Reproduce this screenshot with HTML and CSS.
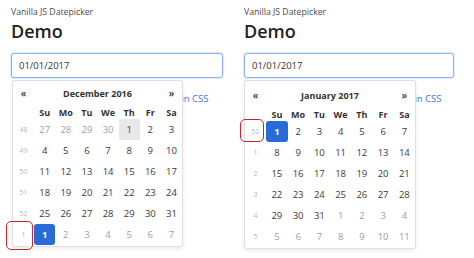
FILE: index.html
```html
<!DOCTYPE html>
<html lang="en">
  <head>
    <meta charset="UTF-8" />
    <title>Vanilla JS Datepicker - Demo</title>
    <link rel="stylesheet" href="styles.css">
  </head>
  <body>
    <div class="shots">
      <!-- December 2016 -->
      <section class="shot shot--dec">
        <p class="eyebrow">Vanilla JS Datepicker</p>
        <h1 class="title">Demo</h1>
        <div class="field">
          <input type="text" value="01/01/2017" />
          <div class="links"><a href="#">Plain CSS</a></div>
          <div class="picker picker--dec">
            <div class="picker-head">
              <span class="nav">&laquo;</span>
              <span class="month">December 2016</span>
              <span class="nav">&raquo;</span>
            </div>
            <div class="picker-grid dow">
              <span></span><span>Su</span><span>Mo</span><span>Tu</span><span>We</span><span>Th</span><span>Fr</span><span>Sa</span>
            </div>
            <div class="picker-grid days">
              <span class="wk">48</span><span class="other">27</span><span class="other">28</span><span class="other">29</span><span class="other">30</span><span class="focused">1</span><span>2</span><span>3</span>
              <span class="wk">49</span><span>4</span><span>5</span><span>6</span><span>7</span><span>8</span><span>9</span><span>10</span>
              <span class="wk">50</span><span>11</span><span>12</span><span>13</span><span>14</span><span>15</span><span>16</span><span>17</span>
              <span class="wk">51</span><span>18</span><span>19</span><span>20</span><span>21</span><span>22</span><span>23</span><span>24</span>
              <span class="wk">52</span><span>25</span><span>26</span><span>27</span><span>28</span><span>29</span><span>30</span><span>31</span>
              <span class="wk">1</span><span class="selected">1</span><span class="other">2</span><span class="other">3</span><span class="other">4</span><span class="other">5</span><span class="other">6</span><span class="other">7</span>
            </div>
          </div>
        </div>
        <div class="mark mark--dec"></div>
      </section>

      <!-- January 2017 -->
      <section class="shot shot--jan">
        <p class="eyebrow">Vanilla JS Datepicker</p>
        <h1 class="title">Demo</h1>
        <div class="field">
          <input type="text" value="01/01/2017" />
          <div class="links"><a href="#">Plain CSS</a></div>
          <div class="picker picker--jan">
            <div class="picker-head">
              <span class="nav">&laquo;</span>
              <span class="month">January 2017</span>
              <span class="nav">&raquo;</span>
            </div>
            <div class="picker-grid dow">
              <span></span><span>Su</span><span>Mo</span><span>Tu</span><span>We</span><span>Th</span><span>Fr</span><span>Sa</span>
            </div>
            <div class="picker-grid days">
              <span class="wk">52</span><span class="selected">1</span><span>2</span><span>3</span><span>4</span><span>5</span><span>6</span><span>7</span>
              <span class="wk">1</span><span>8</span><span>9</span><span>10</span><span>11</span><span>12</span><span>13</span><span>14</span>
              <span class="wk">2</span><span>15</span><span>16</span><span>17</span><span>18</span><span>19</span><span>20</span><span>21</span>
              <span class="wk">3</span><span>22</span><span>23</span><span>24</span><span>25</span><span>26</span><span>27</span><span>28</span>
              <span class="wk">4</span><span>29</span><span>30</span><span>31</span><span class="other">1</span><span class="other">2</span><span class="other">3</span><span class="other">4</span>
              <span class="wk">5</span><span class="other">5</span><span class="other">6</span><span class="other">7</span><span class="other">8</span><span class="other">9</span><span class="other">10</span><span class="other">11</span>
            </div>
          </div>
        </div>
        <div class="mark mark--jan"></div>
      </section>
    </div>
  </body>
</html>
```

FILE: styles.css
```css
* {
  box-sizing: border-box;
}

body {
  margin: 0;
  font-family: "Open Sans", "Noto Sans", sans-serif;
  color: #212529;
  background: #fff;
}

.shots {
  display: flex;
  width: 474px;
  height: 258px;
  overflow: hidden;
}

.shot {
  position: relative;
  flex: none;
  width: 237px;
  padding: 6px 14px 0 11px;
}

.shot--jan {
  padding: 6px 20px 0 7px;
}

.eyebrow {
  margin: 0;
  font-size: 8.7px;
  line-height: 12px;
  color: #4a4a4a;
}

.title {
  margin: 2px 0 0;
  font-size: 18px;
  line-height: 22px;
  font-weight: 600;
  color: #222;
}

.field {
  position: relative;
  margin-top: 11px;
}

.field input {
  display: block;
  width: 100%;
  height: 25px;
  padding: 0 7px;
  font: inherit;
  font-size: 9.5px;
  color: #333;
  border: 1px solid #8fb2ea;
  border-radius: 3px;
  box-shadow: 0 0 0 1px rgba(13, 110, 253, 0.14);
  outline: none;
}

.links {
  margin: 15px 0 0 157px;
  font-size: 9.5px;
  line-height: 12px;
}

.links a {
  color: #3b7ad8;
  text-decoration: none;
}

/* datepicker dropdown */
.picker {
  position: absolute;
  top: 27px;
  left: 1px;
  width: 171px;
  padding-bottom: 1px;
  background: #fff;
  border: 1px solid rgba(0, 0, 0, 0.12);
  border-radius: 3px;
  box-shadow: 0 2px 4px rgba(0, 0, 0, 0.08);
}

.picker--jan {
  left: 0;
  width: 172px;
  padding-top: 2px;
}

.picker-head {
  display: grid;
  grid-template-columns: 1fr 6fr 1fr;
  align-items: center;
  height: 24px;
  text-align: center;
  font-size: 9px;
  color: #333;
}

.picker-head .month {
  font-weight: 700;
}

.picker-head .nav {
  font-size: 10px;
  font-weight: 600;
}

.picker-grid {
  display: grid;
  grid-template-columns: repeat(8, 1fr);
}

.picker-grid span {
  display: flex;
  align-items: center;
  justify-content: center;
}

.dow {
  height: 14px;
  font-size: 9px;
  font-weight: 700;
  color: #333;
}

.days {
  grid-auto-rows: 21px;
  font-size: 9.5px;
  color: #3a3a3a;
}

.days .wk {
  font-size: 7px;
  color: #b8b8b8;
}

.days .other {
  color: #a0a0a0;
}

.days .focused {
  background: #e8e8e8;
  border-radius: 2px;
}

.days .selected {
  background: #2a6bd8;
  color: #fff;
  font-weight: 700;
  border-radius: 3px;
}

/* red annotation rings */
.mark {
  position: absolute;
  border: 1.5px solid #c8262d;
  border-radius: 5px;
}

.mark--dec {
  left: 6px;
  top: 221px;
  width: 27px;
  height: 29px;
}

.mark--jan {
  left: 3px;
  top: 119px;
  width: 24px;
  height: 23px;
}
```
